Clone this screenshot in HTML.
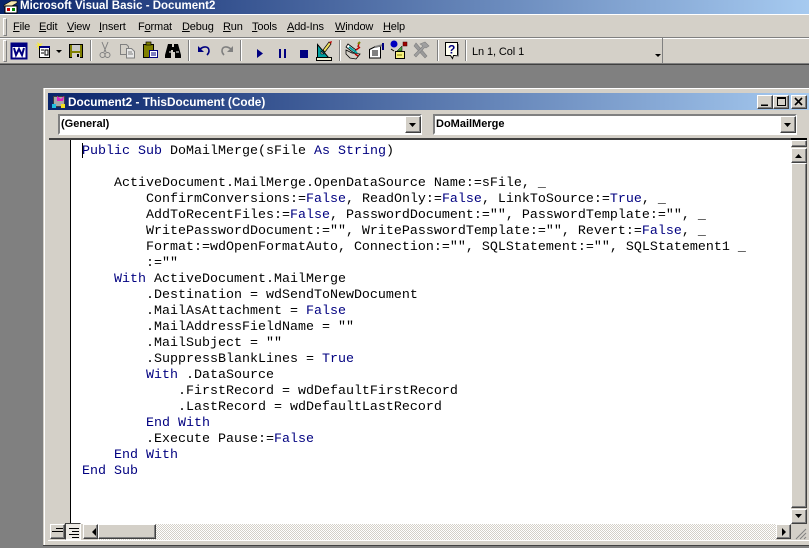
<!DOCTYPE html>
<html><head><meta charset="utf-8"><style>
html,body{margin:0;padding:0}
body{width:809px;height:548px;overflow:hidden;position:relative;background:#808080;font-family:"Liberation Sans",sans-serif;font-size:11px;color:#000}
div,pre,svg{position:absolute;margin:0}
.btn{background:#d4d0c8;box-sizing:border-box;border:1px solid;border-color:#fff #404040 #404040 #fff;box-shadow:inset -1px -1px 0 #808080}
.m{top:21px;white-space:nowrap;letter-spacing:-.15px}
u{text-decoration:underline}
.sep{top:40px;width:1px;height:21px;background:#808080;box-shadow:1px 0 0 #fff}
.grip{width:2px;background:#d4d0c8;border:1px solid;border-color:#fff #808080 #808080 #fff}
b.k{font-weight:normal;color:#000080}
pre{font-family:"Liberation Mono",monospace;font-size:13.33px;line-height:16px;left:82px;top:144px;color:#000;letter-spacing:0}
</style></head><body>
<div style="left:0;top:0;width:809px;height:14px;background:linear-gradient(90deg,#0a246a,#a6caf0)"></div>
<svg style="left:3px;top:0" width="16" height="14"><path d="M1 5L8 1h6v2L7 7H1z" fill="#f4e9b0" stroke="#000" stroke-width=".6"/><rect x="2" y="6" width="12" height="7" fill="#fff" stroke="#000"/><rect x="4" y="8" width="3" height="3" fill="#c00"/><rect x="9" y="8" width="3" height="3" fill="#080"/></svg>
<div style="left:20px;top:0;color:#fff;font-weight:bold;font-size:11.5px;white-space:nowrap">Microsoft Visual Basic - Document2</div>

<div style="left:0;top:14px;width:809px;height:1px;background:#fff"></div>
<div style="left:0;top:15px;width:809px;height:48px;background:#d4d0c8"></div>
<div style="left:0;top:37px;width:809px;height:1px;background:#808080"></div>
<div style="left:0;top:38px;width:809px;height:1px;background:#fff"></div>
<div style="left:0;top:63px;width:809px;height:1px;background:#808080"></div>
<div style="left:0;top:64px;width:809px;height:1px;background:#404040"></div>
<div class="grip" style="left:3px;top:18px;height:16px"></div>
<div class="grip" style="left:3px;top:40px;height:20px"></div>

<div class="m" style="left:13px"><u>F</u>ile</div>
<div class="m" style="left:39px"><u>E</u>dit</div>
<div class="m" style="left:67px"><u>V</u>iew</div>
<div class="m" style="left:99px"><u>I</u>nsert</div>
<div class="m" style="left:138px">F<u>o</u>rmat</div>
<div class="m" style="left:182px"><u>D</u>ebug</div>
<div class="m" style="left:223px"><u>R</u>un</div>
<div class="m" style="left:252px"><u>T</u>ools</div>
<div class="m" style="left:287px"><u>A</u>dd-Ins</div>
<div class="m" style="left:335px"><u>W</u>indow</div>
<div class="m" style="left:383px"><u>H</u>elp</div>

<div class="sep" style="left:90px"></div>
<div class="sep" style="left:188px"></div>
<div class="sep" style="left:240px"></div>
<div class="sep" style="left:339px"></div>
<div class="sep" style="left:437px"></div>
<div class="sep" style="left:465px"></div>
<div style="left:662px;top:38px;width:1px;height:25px;background:#808080"></div>
<div style="left:472px;top:46px;white-space:nowrap;font-size:11px;letter-spacing:-.1px">Ln 1, Col 1</div>
<svg style="left:0;top:38px" width="670" height="26">
<!-- W word icon -->
<rect x="11.500" y="5.500" width="15" height="15" fill="#fff" stroke="#000080" stroke-width="2"/><rect x="11" y="5" width="16" height="4" fill="#000080"/>
<path d="M14 10l2 7 3-6 3 6 2-7" fill="none" stroke="#000080" stroke-width="2"/>
<!-- insert form -->
<path d="M37 4l1 3-3-1 3 2-3 2 3-1 0 3 2-3 3 1-2-3 2-2-3 1z" fill="#f6e83a"/>
<rect x="39.500" y="8.500" width="10" height="11" fill="#fff" stroke="#000"/><rect x="39" y="8" width="11" height="2" fill="#000080"/><path d="M41 12h3M41 15h3M45 12h3v5h-3z" stroke="#000" fill="none"/>
<path d="M56 12h6l-3 3z" fill="#000"/>
<!-- save -->
<rect x="69.500" y="6.500" width="13" height="13" fill="#808000" stroke="#000"/><rect x="72" y="7" width="8" height="6" fill="#c8c8c8"/><rect x="72" y="15" width="8" height="5" fill="#d4d0c8"/><rect x="77" y="16" width="2" height="3" fill="#000"/>
<!-- cut -->
<path d="M102 4l4 10M108 4l-4 10" stroke="#808080" fill="none"/><circle cx="102.500" cy="17" r="2.500" fill="none" stroke="#808080"/><circle cx="107.500" cy="17" r="2.500" fill="none" stroke="#808080"/>
<!-- copy -->
<path d="M120.500 6.500h6l2 2v8h-8z" fill="#d4d0c8" stroke="#808080"/><path d="M126.500 10.500h5l3 3v6.500h-8z" fill="#e8e8e8" stroke="#808080"/><path d="M128 14h4M128 16h5" stroke="#808080"/>
<!-- paste -->
<rect x="143.500" y="6.500" width="10" height="13" fill="#808000" stroke="#000"/><rect x="146" y="4" width="5" height="3" fill="#808000" stroke="#000" stroke-width=".7"/><rect x="149.500" y="12.500" width="8" height="7" fill="#fff" stroke="#000080"/><path d="M151 15h5M151 17h5" stroke="#000080"/>
<!-- binoculars -->
<path d="M168 6h4v3h2V6h4l3 11v3h-6v-6h-2v-2h-2v2h0v6h-6v-3z" fill="#000"/><path d="M169 14h2M176 14h3" stroke="#fff"/>
<!-- undo -->
<path d="M198 8v6h6z" fill="#000080"/><path d="M200 11c4-3 9-3 9 2 0 2-1 3-2 4" fill="none" stroke="#000080" stroke-width="1.600"/>
<!-- redo -->
<path d="M233 8v6h-6z" fill="#808080"/><path d="M231 11c-4-3-9-3-9 2 0 2 1 3 2 4" fill="none" stroke="#808080" stroke-width="1.600"/>
<!-- play pause stop -->
<path d="M257 11l6 4.500-6 4.500z" fill="#000080"/>
<path d="M279 11h2v9h-2zM284 11h2v9h-2z" fill="#000080"/>
<rect x="300" y="12" width="8" height="8" fill="#000080"/>
<!-- design -->
<path d="M317.500 19.500V6.500l11 13z" fill="#00a0a0" stroke="#000"/><path d="M321 16v-3l3 3z" fill="#d4d0c8" stroke="#000" stroke-width=".6"/><path d="M323 12l6-8 2 2-6 8z" fill="#f0e060" stroke="#000" stroke-width=".7"/><path d="M329 4l2 2 1-3z" fill="#c00000"/><rect x="316.500" y="19.500" width="15" height="3" fill="#f0f0d0" stroke="#000"/>
<!-- project -->
<path d="M348 6l8 6-2 3-8-6z" fill="#fff" stroke="#000" stroke-width=".8"/><path d="M346 12l6 3 8 1-4 5-6-1-4-4z" fill="#d4d0c8" stroke="#000" stroke-width=".8"/><path d="M349 9l8 6" stroke="#00a0a0" stroke-width="2"/><path d="M359 5l-1 4M356 12l4-3M355 16l3 2" stroke="#c00000" stroke-width="1.500"/><path d="M360 4l-2 2" stroke="#808000" stroke-width="2"/>
<!-- properties -->
<path d="M369.500 11.500l6-3h5v11.500h-11z" fill="#fff" stroke="#000"/><path d="M372 13h6M372 15h6M372 17h6" stroke="#000"/><path d="M375 9l8-2" stroke="#808080" stroke-width="2"/><rect x="382" y="5" width="2" height="7" fill="#000080"/>
<!-- object browser -->
<circle cx="394" cy="6" r="3.500" fill="#0000c0"/><rect x="403" y="4" width="4" height="4" fill="#a00000" stroke="#400000" stroke-width=".5"/><path d="M397 13l5-5v5z" fill="#40a040" stroke="#000" stroke-width=".5"/><rect x="395.500" y="13.500" width="9" height="7" fill="#f6f080" stroke="#000"/><path d="M391 11l3 2" stroke="#000"/><path d="M397 17h5" stroke="#808000"/>
<!-- toolbox -->
<path d="M416 5l11 13-2 2-11-12z" fill="#9a9a9a" stroke="#808080" stroke-width=".6"/><path d="M420 6l5-2 4 4-3 2-1-1-9 10-2-2 9-9z" fill="#a0a0a0" stroke="#808080" stroke-width=".6"/>
<!-- help -->
<path d="M445.500 4.500h12v13h-4l-1 3-2-3h-5z" fill="#fffff0" stroke="#000"/><path d="M458.500 6v12h-3" stroke="#808080" fill="none"/><text x="448" y="15.500" font-family="Liberation Sans" font-size="12" font-weight="bold" fill="#000080">?</text>
<path d="M655 16h6l-3 3z" fill="#000"/>
</svg>

<!-- code window -->
<div style="left:44px;top:88px;width:765px;height:457px;background:#d4d0c8;border-top:1px solid #fff;border-left:1px solid #fff;box-sizing:border-box"></div>
<div style="left:43px;top:88px;width:1px;height:458px;background:#d4d0c8"></div>
<div style="left:43px;top:545px;width:766px;height:1px;background:#404040"></div>
<div style="left:48px;top:93px;width:761px;height:17px;background:linear-gradient(90deg,#0a246a,#a6caf0)"></div>
<svg style="left:51px;top:94px" width="16" height="15"><rect x="2.500" y="2.500" width="11" height="10" fill="#a8a8a8" stroke="#404040"/><path d="M6 2l4 3 3-3-1 5H6z" fill="#e020c0"/><rect x="1" y="10" width="4" height="4" fill="#20c0e0"/><rect x="10" y="10" width="4" height="4" fill="#f0e020"/></svg>
<div style="left:68px;top:95px;color:#fff;font-weight:bold;font-size:11.8px;white-space:nowrap">Document2 - ThisDocument (Code)</div>
<div class="btn" style="left:757px;top:95px;width:16px;height:14px"></div>
<div class="btn" style="left:773px;top:95px;width:16px;height:14px"></div>
<div class="btn" style="left:791px;top:95px;width:16px;height:14px"></div>
<svg style="left:757px;top:95px" width="50" height="14"><path d="M4 9.500h7v1.500H4z" fill="#000"/><rect x="20.500" y="2.500" width="8" height="8" fill="none" stroke="#000"/><path d="M20 3h9" stroke="#000" stroke-width="2"/><path d="M38 3l7 7M45 3l-7 7" stroke="#000" stroke-width="1.600"/></svg>

<div style="left:58px;top:114px;width:364px;height:21px;box-sizing:border-box;background:#fff;border:2px solid;border-color:#808080 #fff #fff #808080"></div>
<div style="left:433px;top:114px;width:364px;height:21px;box-sizing:border-box;background:#fff;border:2px solid;border-color:#808080 #fff #fff #808080"></div>
<div style="left:61px;top:118px;font-weight:bold;font-size:11px;white-space:nowrap">(General)</div>
<div style="left:436px;top:118px;font-weight:bold;font-size:11px;white-space:nowrap">DoMailMerge</div>
<div class="btn" style="left:405px;top:116px;width:16px;height:17px"></div>
<div class="btn" style="left:780px;top:116px;width:16px;height:17px"></div>
<svg style="left:405px;top:116px" width="391" height="17"><path d="M4 7h7l-3.500 4z" fill="#000"/><path d="M379 7h7l-3.500 4z" fill="#000"/></svg>

<!-- code area -->
<div style="left:49px;top:138px;width:742px;height:386px;background:#fff;border-top:2px solid #404040;box-sizing:border-box"></div>
<div style="left:49px;top:140px;width:21px;height:384px;background:#d4d0c8;border-right:1px solid #000"></div>
<div style="left:82px;top:143px;width:1px;height:15px;background:#000"></div>
<pre><b class="k">Public Sub</b> DoMailMerge(sFile <b class="k">As String</b>)

    ActiveDocument.MailMerge.OpenDataSource Name:=sFile, _
        ConfirmConversions:=<b class="k">False</b>, ReadOnly:=<b class="k">False</b>, LinkToSource:=<b class="k">True</b>, _
        AddToRecentFiles:=<b class="k">False</b>, PasswordDocument:="", PasswordTemplate:="", _
        WritePasswordDocument:="", WritePasswordTemplate:="", Revert:=<b class="k">False</b>, _
        Format:=wdOpenFormatAuto, Connection:="", SQLStatement:="", SQLStatement1 _
        :=""
    <b class="k">With</b> ActiveDocument.MailMerge
        .Destination = wdSendToNewDocument
        .MailAsAttachment = <b class="k">False</b>
        .MailAddressFieldName = ""
        .MailSubject = ""
        .SuppressBlankLines = <b class="k">True</b>
        <b class="k">With</b> .DataSource
            .FirstRecord = wdDefaultFirstRecord
            .LastRecord = wdDefaultLastRecord
        <b class="k">End With</b>
        .Execute Pause:=<b class="k">False</b>
    <b class="k">End With</b>
<b class="k">End Sub</b></pre>

<!-- vertical scrollbar -->
<div style="left:791px;top:138px;width:1px;height:386px;background:#d4d0c8"></div>
<div style="left:791px;top:138px;width:16px;height:2px;background:#000"></div>
<div class="btn" style="left:791px;top:140px;width:16px;height:7px"></div>
<div class="btn" style="left:791px;top:148px;width:16px;height:15px"></div>
<div class="btn" style="left:791px;top:163px;width:16px;height:345px"></div>
<div class="btn" style="left:791px;top:509px;width:16px;height:15px"></div>
<svg style="left:791px;top:148px" width="16" height="376"><path d="M4 10h7L7.500 6z" fill="#000"/><path d="M4 366h7l-3.500 4z" fill="#000"/></svg>

<!-- horizontal scrollbar -->
<div style="left:49px;top:524px;width:742px;height:16px;background:#d4d0c8"></div>
<svg style="left:98px;top:524px" width="678" height="16"><defs><pattern id="h" width="2" height="2" patternUnits="userSpaceOnUse"><rect width="2" height="2" fill="#fff"/><rect width="1" height="1" fill="#d4d0c8"/><rect x="1" y="1" width="1" height="1" fill="#d4d0c8"/></pattern></defs><rect width="678" height="16" fill="url(#h)"/></svg>
<div class="btn" style="left:50px;top:524px;width:15px;height:15px"></div>
<div class="btn" style="left:65px;top:523px;width:16px;height:17px;border-color:#404040 #fff #fff #404040;box-shadow:none;background:#ece9e4"></div>
<div class="btn" style="left:83px;top:524px;width:15px;height:15px"></div>
<div class="btn" style="left:98px;top:524px;width:58px;height:15px"></div>
<div class="btn" style="left:776px;top:524px;width:15px;height:15px"></div>
<svg style="left:50px;top:524px" width="760" height="16">
<path d="M6 4.500h7M2 7.500h11" stroke="#000" fill="none"/>
<path d="M19 4.500h10M22 7.500h7M19 10.500h10M22 13.500h7" stroke="#000" fill="none"/>
<path d="M42 8l4-4v8z" fill="#000"/>
<path d="M732 4l4 4-4 4z" fill="#000"/>
<path d="M746 15l10-10M750 15l6-6M754 15l2-2" stroke="#808080" fill="none"/>
</svg>
<div style="left:48px;top:540px;width:761px;height:1px;background:#fff"></div>
</body></html>
